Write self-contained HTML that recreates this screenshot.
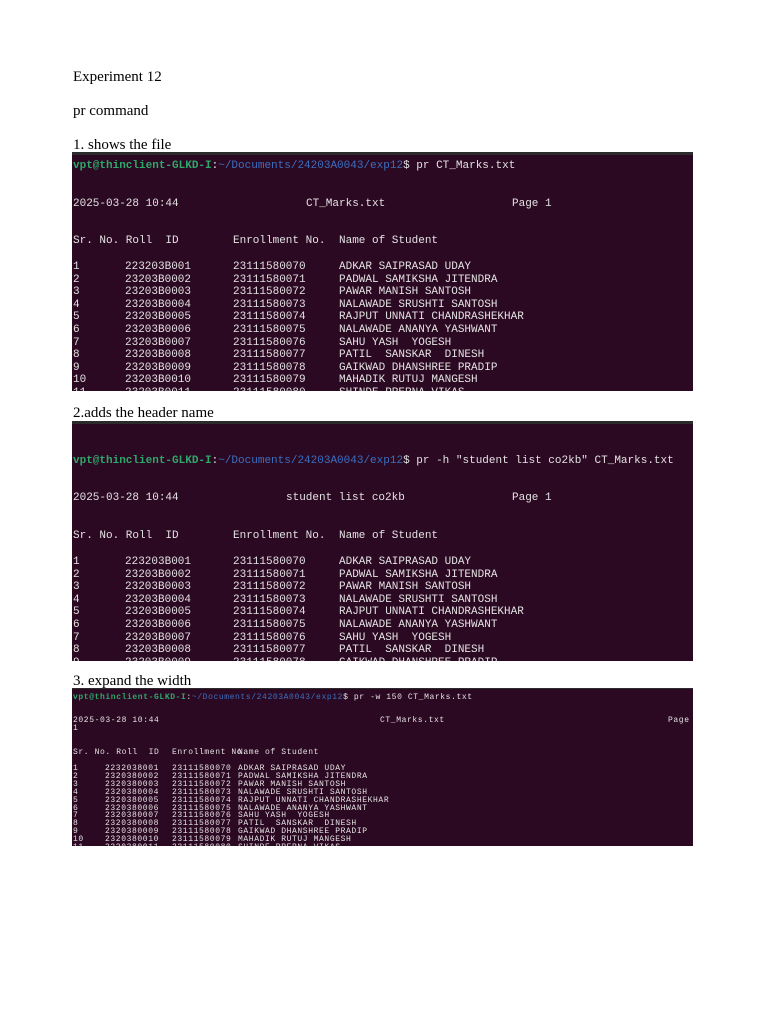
<!DOCTYPE html>
<html><head><meta charset="utf-8"><style>
body{margin:0;width:768px;height:1024px;background:#fff;position:relative;overflow:hidden;font-family:"Liberation Serif",serif;}
.t{position:absolute;left:73px;font-size:15px;color:#000;white-space:nowrap;line-height:1}
.term{position:absolute;left:72px;width:621px;background:#2c0922;border-top:3px solid #2b2b2b;overflow:hidden}
.term div{position:absolute;white-space:pre;font-family:"Liberation Mono",monospace;color:#e2e2e2;line-height:1}
.m{font-size:11px}
.s{font-size:8px;letter-spacing:0.6px}
.g{color:#2ea86a;font-weight:bold}.b{color:#3b6fc0}
</style></head><body>
<div class="t" style="top:70px">Experiment 12</div>
<div class="t" style="top:104px">pr command</div>
<div class="t" style="top:138px">1. shows the file</div>
<div class="t" style="top:406px">2.adds the header name</div>
<div class="t" style="top:674px">3. expand the width</div>

<div class="term m" style="top:152px;height:236px">
<div style="left:1px;top:6px"><span class="g">vpt@thinclient-GLKD-I</span>:<span class="b">~/Documents/24203A0043/exp12</span>$ pr CT_Marks.txt</div>
<div style="left:1px;top:44px">2025-03-28 10:44</div><div style="left:234px;top:44px">CT_Marks.txt</div><div style="left:440px;top:44px">Page 1</div>
<div style="left:1px;top:81px">Sr. No. Roll  ID</div><div style="left:161px;top:81px">Enrollment No.</div><div style="left:267px;top:81px">Name of Student</div>
<div style="left:1px;top:106px;line-height:12.6px">1
2
3
4
5
6
7
8
9
10
11</div>
<div style="left:53px;top:106px;line-height:12.6px">223203B001
23203B0002
23203B0003
23203B0004
23203B0005
23203B0006
23203B0007
23203B0008
23203B0009
23203B0010
23203B0011</div>
<div style="left:161px;top:106px;line-height:12.6px">23111580070
23111580071
23111580072
23111580073
23111580074
23111580075
23111580076
23111580077
23111580078
23111580079
23111580080</div>
<div style="left:267px;top:106px;line-height:12.6px">ADKAR SAIPRASAD UDAY
PADWAL SAMIKSHA JITENDRA
PAWAR MANISH SANTOSH
NALAWADE SRUSHTI SANTOSH
RAJPUT UNNATI CHANDRASHEKHAR
NALAWADE ANANYA YASHWANT
SAHU YASH  YOGESH
PATIL  SANSKAR  DINESH
GAIKWAD DHANSHREE PRADIP
MAHADIK RUTUJ MANGESH
SHINDE PRERNA VIKAS</div>
</div>

<div class="term m" style="top:421px;height:237px">
<div style="left:1px;top:32px"><span class="g">vpt@thinclient-GLKD-I</span>:<span class="b">~/Documents/24203A0043/exp12</span>$ pr -h "student list co2kb" CT_Marks.txt</div>
<div style="left:1px;top:69px">2025-03-28 10:44</div><div style="left:214px;top:69px">student list co2kb</div><div style="left:440px;top:69px">Page 1</div>
<div style="left:1px;top:107px">Sr. No. Roll  ID</div><div style="left:161px;top:107px">Enrollment No.</div><div style="left:267px;top:107px">Name of Student</div>
<div style="left:1px;top:132px;line-height:12.6px">1
2
3
4
5
6
7
8
9</div>
<div style="left:53px;top:132px;line-height:12.6px">223203B001
23203B0002
23203B0003
23203B0004
23203B0005
23203B0006
23203B0007
23203B0008
23203B0009</div>
<div style="left:161px;top:132px;line-height:12.6px">23111580070
23111580071
23111580072
23111580073
23111580074
23111580075
23111580076
23111580077
23111580078</div>
<div style="left:267px;top:132px;line-height:12.6px">ADKAR SAIPRASAD UDAY
PADWAL SAMIKSHA JITENDRA
PAWAR MANISH SANTOSH
NALAWADE SRUSHTI SANTOSH
RAJPUT UNNATI CHANDRASHEKHAR
NALAWADE ANANYA YASHWANT
SAHU YASH  YOGESH
PATIL  SANSKAR  DINESH
GAIKWAD DHANSHREE PRADIP</div>
</div>

<div class="term s" style="top:688px;height:157px;border-top:1px solid #2b2b2b">
<div style="left:1px;top:5px"><span class="g">vpt@thinclient-GLKD-I</span>:<span class="b">~/Documents/24203A0043/exp12</span>$ pr -w 150 CT_Marks.txt</div>
<div style="left:1px;top:28px">2025-03-28 10:44</div><div style="left:308px;top:28px">CT_Marks.txt</div><div style="left:596px;top:28px">Page</div>
<div style="left:1px;top:36px">1</div>
<div style="left:1px;top:60px">Sr. No. Roll  ID</div><div style="left:100px;top:60px">Enrollment No.</div><div style="left:166px;top:60px">Name of Student</div>
<div style="left:1px;top:76px;line-height:7.9px">1
2
3
4
5
6
7
8
9
10
11</div>
<div style="left:33px;top:76px;line-height:7.9px">2232038001
2320380002
2320380003
2320380004
2320380005
2320380006
2320380007
2320380008
2320380009
2320380010
2320380011</div>
<div style="left:100px;top:76px;line-height:7.9px">23111580070
23111580071
23111580072
23111580073
23111580074
23111580075
23111580076
23111580077
23111580078
23111580079
23111580080</div>
<div style="left:166px;top:76px;line-height:7.9px">ADKAR SAIPRASAD UDAY
PADWAL SAMIKSHA JITENDRA
PAWAR MANISH SANTOSH
NALAWADE SRUSHTI SANTOSH
RAJPUT UNNATI CHANDRASHEKHAR
NALAWADE ANANYA YASHWANT
SAHU YASH  YOGESH
PATIL  SANSKAR  DINESH
GAIKWAD DHANSHREE PRADIP
MAHADIK RUTUJ MANGESH
SHINDE PRERNA VIKAS</div>
</div>
</body></html>
